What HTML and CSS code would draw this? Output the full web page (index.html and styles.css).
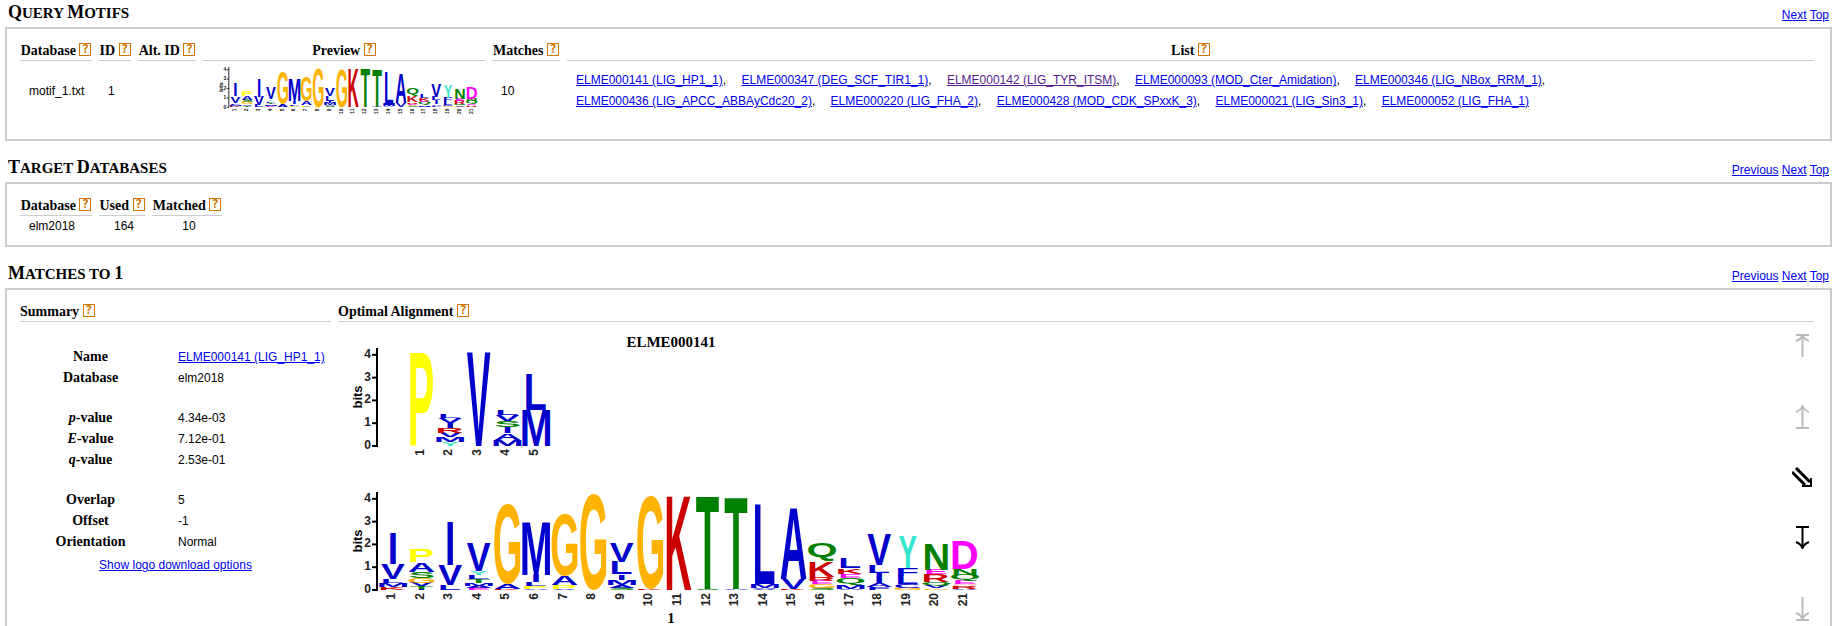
FILE: index.html
```html
<!DOCTYPE html>
<html lang="en">
<head>
    <meta charset="UTF-8">
    <meta name="viewport" content="width=device-width, initial-scale=1.0">
    <title>Tomtom Results</title>
    <link rel="stylesheet" href="styles.css">
</head>
<body>
    <div class="section-head" id="query">
        <h2><span class="cap">Q</span>uery <span class="cap">M</span>otifs</h2>
        <nav><a href="#targets">Next</a> <a href="#query">Top</a></nav>
    </div>
    <div class="box">
        <table class="grid wide">
            <thead>
                <tr>
                    <th class="c-db">Database <button class="help">?</button></th>
                    <th class="c-id">ID <button class="help">?</button></th>
                    <th class="c-alt">Alt. ID <button class="help">?</button></th>
                    <th class="c-preview">Preview <button class="help">?</button></th>
                    <th class="c-matches">Matches <button class="help">?</button></th>
                    <th>List <button class="help">?</button></th>
                </tr>
            </thead>
            <tbody class="query-rows">
                <tr>
                    <td>motif_1.txt</td>
                    <td>1</td>
                    <td></td>
                    <td class="preview"><svg id="preview" class="preview-logo" viewBox="0 0 643 121"></svg></td>
                    <td>10</td>
                    <td>
                        <ul class="match-list">
                            <li><a href="#m1">ELME000141 (LIG_HP1_1)</a>,</li>
                            <li><a href="#m2">ELME000347 (DEG_SCF_TIR1_1)</a>,</li>
                            <li><a href="#m3" class="seen">ELME000142 (LIG_TYR_ITSM)</a>,</li>
                            <li><a href="#m4">ELME000093 (MOD_Cter_Amidation)</a>,</li>
                            <li><a href="#m5">ELME000346 (LIG_NBox_RRM_1)</a>,</li>
                            <li><a href="#m6">ELME000436 (LIG_APCC_ABBAyCdc20_2)</a>,</li>
                            <li><a href="#m7">ELME000220 (LIG_FHA_2)</a>,</li>
                            <li><a href="#m8">ELME000428 (MOD_CDK_SPxxK_3)</a>,</li>
                            <li><a href="#m9">ELME000021 (LIG_Sin3_1)</a>,</li>
                            <li><a href="#m10">ELME000052 (LIG_FHA_1)</a></li>
                        </ul>
                    </td>
                </tr>
            </tbody>
        </table>
    </div>

    <div class="section-head" id="targets">
        <h2><span class="cap">T</span>arget <span class="cap">D</span>atabases</h2>
        <nav><a href="#query">Previous</a> <a href="#matches">Next</a> <a href="#query">Top</a></nav>
    </div>
    <div class="box">
        <table class="grid">
            <thead>
                <tr>
                    <th class="c-db">Database <button class="help">?</button></th>
                    <th class="c-used">Used <button class="help">?</button></th>
                    <th class="c-matched">Matched <button class="help">?</button></th>
                </tr>
            </thead>
            <tbody class="target-rows">
                <tr>
                    <td>elm2018</td>
                    <td class="num">164</td>
                    <td class="num">10</td>
                </tr>
            </tbody>
        </table>
    </div>

    <div class="section-head" id="matches">
        <h2><span class="cap">M</span>atches to <span class="cap">1</span></h2>
        <nav><a href="#targets">Previous</a> <a href="#settings">Next</a> <a href="#query">Top</a></nav>
    </div>
    <div class="box">
        <div class="match">
            <div class="summary">
                <h4>Summary <button class="help">?</button></h4>
                <table class="facts">
                    <tbody>
                        <tr><th>Name</th><td><a href="#m1">ELME000141 (LIG_HP1_1)</a></td></tr>
                        <tr><th>Database</th><td>elm2018</td></tr>
                    </tbody>
                    <tbody>
                        <tr class="first"><th><i>p</i>-value</th><td>4.34e-03</td></tr>
                        <tr><th><i>E</i>-value</th><td>7.12e-01</td></tr>
                        <tr><th><i>q</i>-value</th><td>2.53e-01</td></tr>
                    </tbody>
                    <tbody>
                        <tr class="first"><th>Overlap</th><td>5</td></tr>
                        <tr><th>Offset</th><td>-1</td></tr>
                        <tr><th>Orientation</th><td>Normal</td></tr>
                    </tbody>
                </table>
                <p class="download"><a href="#download">Show logo download options</a></p>
            </div>
            <div class="alignment">
                <h4>Optimal Alignment <button class="help">?</button></h4>
                <div class="align-body">
                    <svg id="alignment" width="643" height="310" viewBox="0 0 643 310"></svg>
                    <div class="arrows">
                        <button class="arrow far-top off" aria-label="First match"><svg viewBox="0 0 22 24"><path class="bar" d="M4 2H17"/><path class="bar" d="M10.5 2V24"/><path class="tip" d="M4 8Q9 6 10.5 3Q12 6 17 8"/></svg></button>
                        <button class="arrow off" aria-label="Previous match"><svg viewBox="0 0 22 24"><path class="bar" d="M4 23H17"/><path class="bar" d="M10.5 1V23"/><path class="tip" d="M4 7Q9 5 10.5 1Q12 5 17 7"/></svg></button>
                        <button class="arrow" aria-label="Next query"><svg viewBox="0 0 22 24"><path class="bar bold" d="M4 3L18 17M0 7L13 20"/><path class="bar" d="M19 13V21H10"/></svg></button>
                        <button class="arrow" aria-label="Next match"><svg viewBox="0 0 22 24"><path class="bar" d="M4 2H17"/><path class="bar" d="M10.5 2V23"/><path class="tip" d="M4 17Q9 19 10.5 23Q12 19 17 17"/></svg></button>
                        <button class="arrow far-bottom off" aria-label="Last match"><svg viewBox="0 0 22 24"><path class="bar" d="M4 23H17"/><path class="bar" d="M10.5 0V22"/><path class="tip" d="M4 16Q9 18 10.5 22Q12 18 17 16"/></svg></button>
                    </div>
                </div>
            </div>
        </div>
    </div>

    <script src="logo.js"></script>
</body>
</html>
```
FILE: styles.css
```css
body {
    margin: 0 6px 0 5px;
    background: #fff;
    color: #000;
    font-family: Arial, "Liberation Sans", sans-serif;
    font-size: 12px;
}
a { color: #00e; }
a.seen { color: #551a8b; }

.section-head {
    display: flex;
    justify-content: space-between;
    align-items: flex-end;
    box-sizing: border-box;
    height: 27px;
    padding: 0 3px 4px;
}
.box + .section-head { margin-top: 14px; }
.section-head h2 {
    margin: 0;
    font-family: "Times New Roman", "Liberation Serif", serif;
    font-size: 15px;
    line-height: 20px;
    text-transform: uppercase;
}
.section-head .cap { font-size: 18px; }
.section-head nav { line-height: 15px; }

.box {
    border: 2px solid #ccc;
    padding: 13px 9px 12px 6px;
}

/* column headings */
.grid { border-spacing: 7px 0; }
.wide { width: 100%; }
.grid th, .match h4 {
    box-sizing: border-box;
    height: 19px;
    margin: 0;
    padding: 0;
    border-bottom: 1px solid #ccc;
    font-family: "Times New Roman", "Liberation Serif", serif;
    font-size: 14px;
    font-weight: bold;
    line-height: 18px;
    white-space: nowrap;
}
.c-db { min-width: 72px; width: 72px; }
.c-id { min-width: 32px; width: 32px; }
.c-alt { min-width: 58px; width: 58px; }
.c-preview { min-width: 282px; width: 282px; }
.c-matches { min-width: 68px; width: 68px; }
.c-used { min-width: 46px; }
.c-matched { min-width: 70px; }

.help {
    box-sizing: border-box;
    width: 12px;
    height: 13px;
    margin: 0;
    padding: 0;
    border: 1px solid #d17400;
    background: #fff;
    color: #d17400;
    font-family: "DejaVu Sans Mono", monospace;
    font-size: 12px;
    line-height: 11px;
    font-weight: bold;
    cursor: help;
    vertical-align: 2px;
}

.grid td { padding: 0 0 0 9px; }
.grid .query-rows td { height: 60px; padding-bottom: 6px; }
.grid td.preview { padding-left: 14px; }
.preview-logo {
    display: block;
    width: 267px;
    height: 50px;
    overflow: visible;
}
.grid .target-rows td { height: 15px; padding-top: 2px; }
.grid .num { text-align: center; padding-left: 4px; }

.match-list {
    margin: 0 20px 0 0;
    padding: 0;
    list-style: none;
    line-height: 21px;
}
.match-list li { display: inline-block; padding-right: 12px; }

/* one match: summary on the left, logos on the right */
.match {
    display: flex;
    gap: 7px;
    margin: 0 7px;
}
.summary { flex: 0 0 311px; }
.alignment { flex: 1; }
.facts {
    margin: 25px 0 0 6px;
    border-spacing: 0;
    line-height: 20px;
}
.facts th {
    width: 129px;
    height: 21px;
    padding: 0;
    font-family: "Times New Roman", "Liberation Serif", serif;
    font-size: 14px;
}
.facts td { padding: 0 0 0 23px; }
.facts tr > * { vertical-align: baseline; }
.facts .first > * { padding-top: 19px; }
.download { margin: 2px 0 0; text-align: center; line-height: 20px; }

.align-body {
    display: flex;
    justify-content: space-between;
    padding: 11px 0 0 12px;
}
#alignment { overflow: visible; }
.arrows {
    display: flex;
    flex-direction: column;
    gap: 36px;
}
.arrow {
    width: 22px;
    height: 24px;
    padding: 0;
    border: 0;
    background: none;
    color: #000;
    cursor: pointer;
}
.arrow svg { display: block; width: 22px; height: 24px; }
.arrow.off { color: #bbb; }
.far-top { margin-bottom: 12px; }
.far-bottom { margin-top: 12px; }
.bar, .tip { fill: none; stroke: currentColor; stroke-width: 2; }
.bold { stroke-width: 3; }

/* sequence logos */
.letter { font: bold 100px "Liberation Sans", sans-serif; }
.axis { stroke: #000; stroke-width: 2; }
.tick-label { font: bold 12px "Liberation Sans", sans-serif; fill: #222; text-anchor: end; }
.bits { font: bold 13px "Liberation Sans", sans-serif; text-anchor: middle; }
.caption { font: bold 15px "Liberation Serif", serif; text-anchor: middle; }
```
FILE: logo.js
```javascript
// each column lists its letters from top to bottom with their heights,
// one bit is 68.4 units
const UNITS_PER_BIT = 68.4;
const BIT = 22.8;
const COLUMN = 28.6;
const AXIS_X = 27;

const COLORS = {
    A: '#00c', C: '#00c', F: '#00c', I: '#00c', L: '#00c', M: '#00c', V: '#00c', W: '#00c',
    N: '#008000', Q: '#008000', S: '#008000', T: '#008000',
    D: '#f0f', E: '#f0f', K: '#c00', R: '#c00',
    G: '#ffb300', H: '#ffcccc', P: '#ff0', Y: '#33e6cc'
};
const WIDTHS = {
    A: 26, C: 25, D: 25, E: 20, F: 20, G: 26, H: 23, I: 6, K: 25, L: 20, M: 28,
    N: 23, P: 23, Q: 28, R: 25, S: 24, T: 23, V: 24, W: 28, Y: 18
};

const target = ['P281', 'L10 V16 I15 R13 V13 M15 Y12', 'V281', 'L15 V20 S18 I18 A20 M18', 'L106 M109'];
const query = [
    'I92 V47 L12 M12 K8',
    'P37 A28 S20 G14 V10 T8 I3',
    'I132 V62 L14',
    'V84 Y12 L12 T12 M9 A7 E6',
    'G241 A17 K2',
    'M158 I21 L12 P9 A4',
    'G184 A26 P11 V4',
    'G289',
    'V56 L38 I17 M16 A8 S6',
    'G281 K2',
    'K283',
    'T281 S2',
    'T275 A4',
    'L237 M13 A4 V2',
    'A216 V31 K2',
    'Q57 K47 R12 E10 G11 S6',
    'L31 K16 E12 Q21 M12 A4',
    'V91 L24 I30 A12 F9',
    'Y94 F23 L25 C12 G6',
    'N79 E13 R23 Q11 V8 G5',
    'D85 N18 Q17 E11 H6 R8 A3'
];

const pen = document.createElement('canvas').getContext('2d');
pen.font = 'bold 100px "Liberation Sans"';

function add(parent, name, attrs, text) {
    const el = document.createElementNS('http://www.w3.org/2000/svg', name);
    for (const key in attrs) el.setAttribute(key, attrs[key]);
    if (text !== undefined) el.textContent = text;
    parent.appendChild(el);
    return el;
}

function drawLetter(parent, letter, cx, bottom, height) {
    const m = pen.measureText(letter);
    const sx = WIDTHS[letter] / (m.actualBoundingBoxRight + m.actualBoundingBoxLeft);
    const sy = height / (m.actualBoundingBoxAscent + m.actualBoundingBoxDescent);
    const x = cx - WIDTHS[letter] / 2 + m.actualBoundingBoxLeft * sx;
    const y = bottom - m.actualBoundingBoxDescent * sy;
    add(parent, 'text', {
        class: 'letter',
        fill: COLORS[letter],
        transform: `translate(${x} ${y}) scale(${sx} ${sy})`
    }, letter);
}

function drawLogo(svg, columns, zeroY, offset) {
    const g = add(svg, 'g', { transform: `translate(0 ${zeroY})` });
    add(g, 'path', { class: 'axis', d: `M${AXIS_X} 1V-98` });
    for (let bit = 0; bit <= 4; bit++) {
        add(g, 'path', { class: 'axis', d: `M${AXIS_X - 5} ${-bit * BIT}H${AXIS_X}` });
        add(g, 'text', { class: 'tick-label', x: AXIS_X - 6, y: 3 - bit * BIT }, bit);
    }
    add(g, 'text', { class: 'bits', transform: 'translate(12 -49) rotate(-90)' }, 'bits');

    columns.forEach((column, i) => {
        const cx = AXIS_X + 16 + COLUMN * (i + offset);
        let bottom = 0;
        column.split(' ').reverse().forEach(part => {
            const height = part.slice(1) / UNITS_PER_BIT * BIT;
            drawLetter(g, part[0], cx, bottom, height);
            bottom -= height;
        });
        add(g, 'text', { class: 'tick-label', transform: `translate(${cx + 2} 3) rotate(-90)` }, i + 1);
    });
}

drawLogo(document.getElementById('preview'), query, 100, 0);

const alignment = document.getElementById('alignment');
add(alignment, 'text', { class: 'caption', x: 321, y: 14 }, 'ELME000141');
drawLogo(alignment, target, 113, 1);
drawLogo(alignment, query, 257, 0);
add(alignment, 'text', { class: 'caption', x: 321, y: 290 }, '1');
```
